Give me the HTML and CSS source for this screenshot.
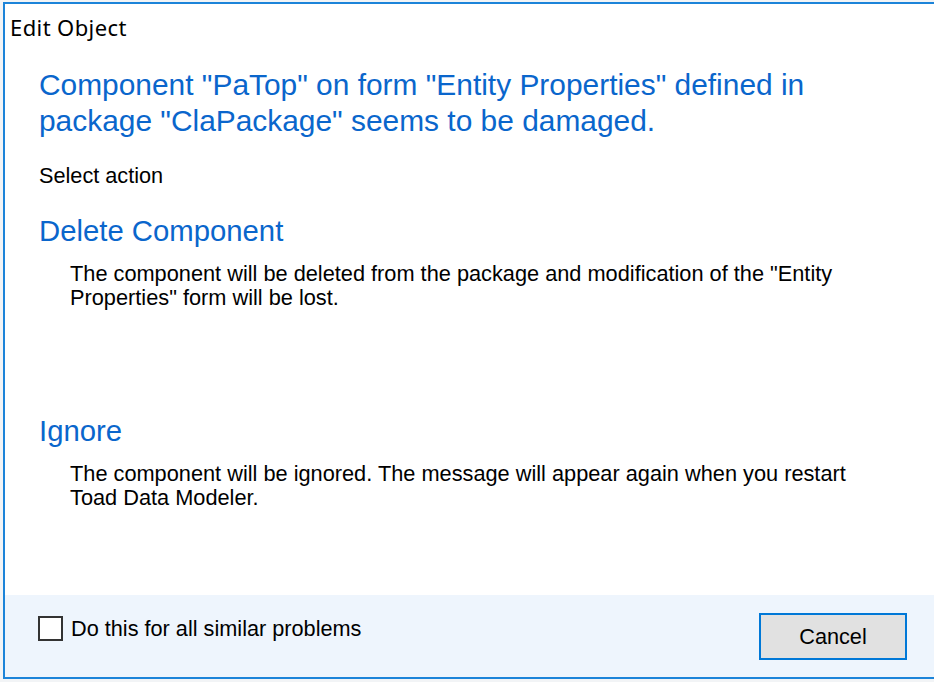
FILE: index.html
```html
<!DOCTYPE html>
<html lang="en">
<head>
<meta charset="utf-8">
<title>Edit Object</title>
<link rel="stylesheet" href="styles.css">
</head>
<body>
<div class="desktop">
  <div class="dialog">
    <div class="titlebar">Edit Object</div>
    <div class="content">
      <h1 class="instruction">Component "PaTop" on form "Entity Properties" defined in package "ClaPackage" seems to be damaged.</h1>
      <p class="select">Select action</p>
      <div class="option">
        <h2 class="option-title">Delete Component</h2>
        <p class="option-desc">The component will be deleted from the package and modification of the "Entity Properties" form will be lost.</p>
      </div>
      <div class="option">
        <h2 class="option-title">Ignore</h2>
        <p class="option-desc">The component will be ignored. The message will appear again when you restart Toad Data Modeler.</p>
      </div>
    </div>
    <div class="footer">
      <label class="check">
        <input type="checkbox" class="check-box">
        <span class="check-label">Do this for all similar problems</span>
      </label>
      <button class="btn-cancel" type="button">Cancel</button>
    </div>
  </div>
</div>
</body>
</html>
```

FILE: styles.css
```css
html, body {
  margin: 0;
  padding: 0;
  overflow: hidden;
}
body {
  background: #f2f4f6;
  font-family: "Liberation Sans", Arial, sans-serif;
}
.desktop {
  width: 934px;
  height: 682px;
  overflow: hidden;
  box-sizing: border-box;
  padding: 2px 0 0 3px;
}
.dialog {
  width: 960px;
  height: 673px;
  border-style: solid;
  border-color: #1c84d9;
  border-width: 2px 0 2px 2px;
  background: #ffffff;
  display: flex;
  flex-direction: column;
}
.titlebar {
  font-family: "Noto Sans", "Open Sans", sans-serif;
  font-size: 22px;
  letter-spacing: 0.4px;
  line-height: 28px;
  height: 28px;
  padding: 9px 0 0 5px;
  color: #000;
}
.content {
  padding-left: 34px;
}
.instruction {
  margin: 26px 0 0 0;
  width: 800px;
  font-size: 29.9px;
  line-height: 36px;
  font-weight: normal;
  color: #0a66cc;
}
.select {
  margin: 25px 0 0 0;
  font-size: 21.7px;
  line-height: 24px;
  color: #000;
}
.option {
  height: 200px;
}
.option:last-child {
  height: auto;
}
.select + .option {
  margin-top: 25px;
}
.option-title {
  margin: 0;
  font-size: 29.3px;
  line-height: 36px;
  font-weight: normal;
  color: #0a66cc;
}
.option-desc {
  margin: 13px 0 0 31px;
  width: 800px;
  font-size: 21.75px;
  line-height: 24px;
  color: #000;
}
.footer {
  margin-top: auto;
  height: 82px;
  box-sizing: border-box;
  background: #eef5fd;
  display: flex;
  align-items: flex-start;
  padding: 18px 58px 0 33px;
}
.check {
  display: flex;
  align-items: center;
  margin-top: 3px;
  gap: 8px;
}
.check-box {
  appearance: none;
  -webkit-appearance: none;
  margin: 0;
  width: 25px;
  height: 25px;
  box-sizing: border-box;
  border: 2px solid #333333;
  background: #ffffff;
}
.check-label {
  font-size: 21.7px;
  line-height: 24px;
  color: #000;
}
.btn-cancel {
  margin-left: auto;
  width: 148px;
  height: 47px;
  box-sizing: border-box;
  border: 2px solid #0078d7;
  background: #e1e1e1;
  font-family: "Liberation Sans", Arial, sans-serif;
  font-size: 21.7px;
  color: #000;
  padding: 0;
}
```
